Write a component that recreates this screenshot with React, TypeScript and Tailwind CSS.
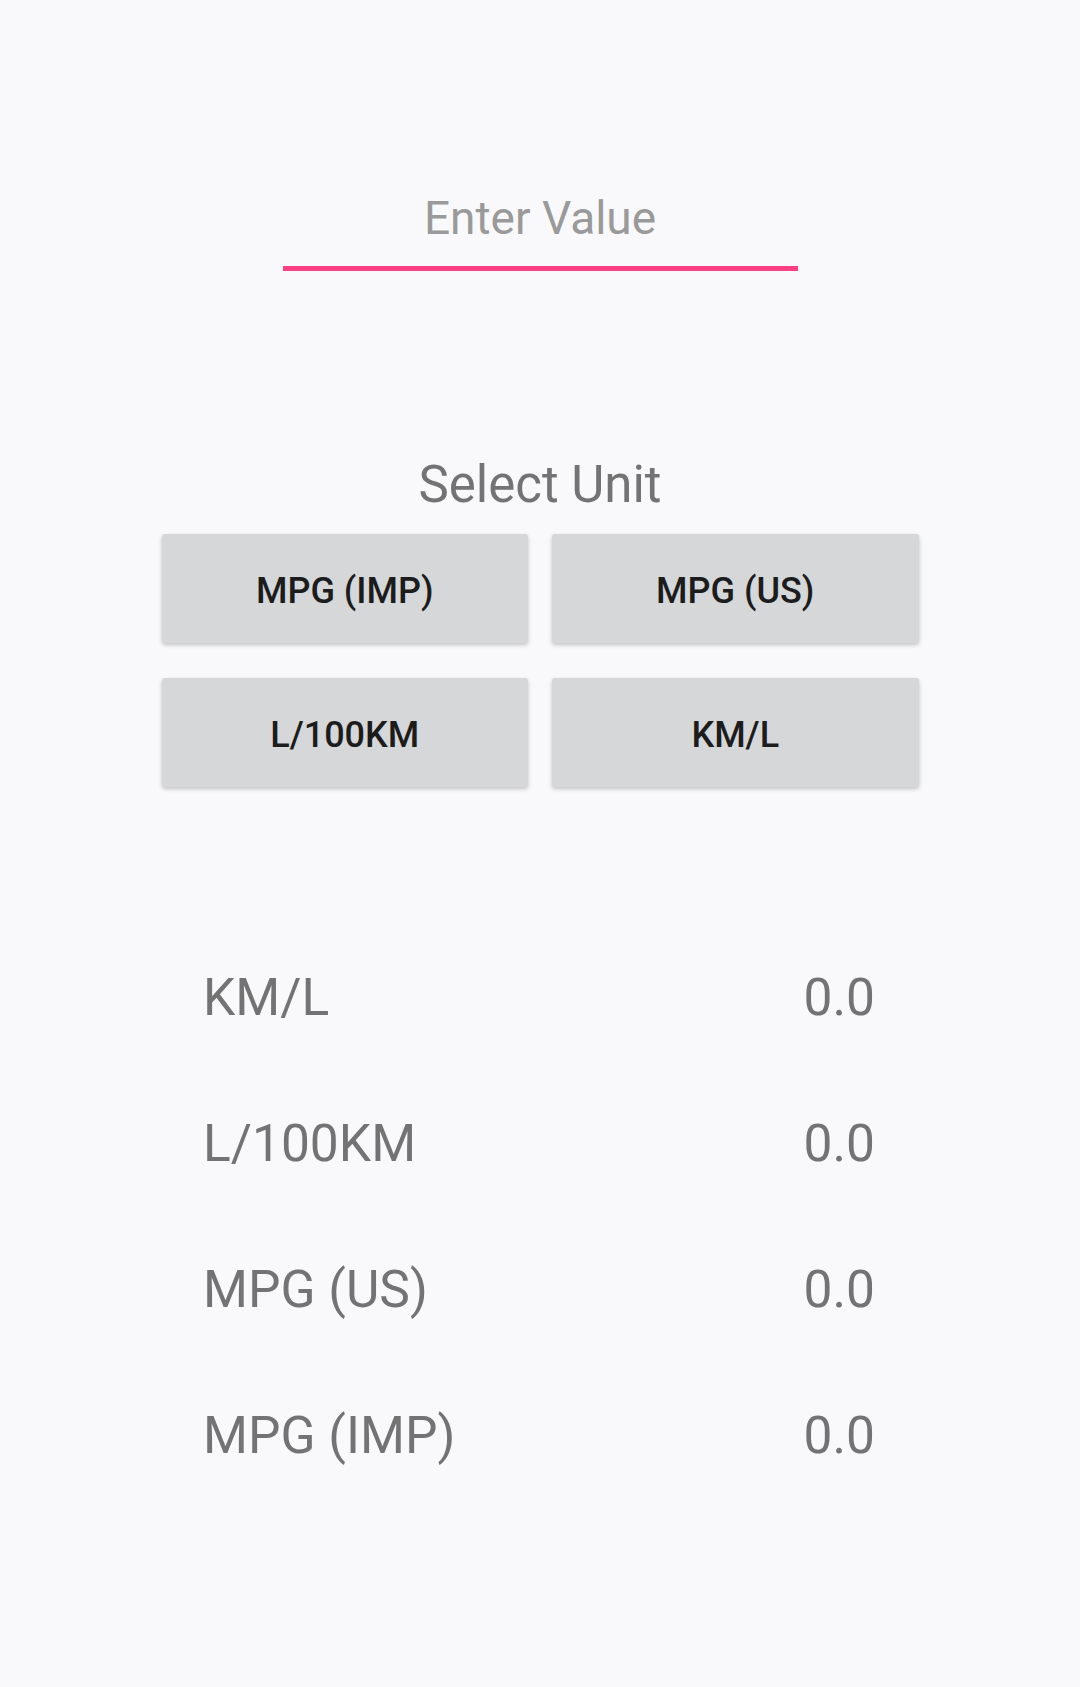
const UNITS = ["MPG (IMP)", "MPG (US)", "L/100KM", "KM/L"];

const RESULTS = [
  { label: "KM/L", value: "0.0" },
  { label: "L/100KM", value: "0.0" },
  { label: "MPG (US)", value: "0.0" },
  { label: "MPG (IMP)", value: "0.0" },
];

export default function App() {
  return (
    <div
      className="min-h-screen bg-[#f9f9fb] pb-[180px]"
      style={{ fontFamily: "Roboto, 'Noto Sans', sans-serif" }}
    >
      {/* input field */}
      <div className="mx-auto w-[515px] pt-[190px]">
        <div className="h-[56px] text-center text-[46px] leading-[56px] text-[#9a9a9a]">
          Enter Value
        </div>
        <div className="mt-[20px] h-[5px] bg-[#ff4081]" />
      </div>

      <div className="mt-[186px] h-[56px] text-center text-[51px] leading-[56px] text-[#737373]">
        Select Unit
      </div>

      <div className="mx-auto mt-[21px] grid w-[757px] grid-cols-2 gap-x-[24px] gap-y-[35px]">
        {UNITS.map((u) => (
          <button
            key={u}
            className="h-[109px] rounded-[3px] bg-[#d6d7d8] pt-[4px] text-[36px] font-medium text-[#1c1c1c] shadow-[0_2px_4px_rgba(0,0,0,0.22)]"
          >
            {u}
          </button>
        ))}
      </div>

      <div className="ml-[203px] mt-[181px] flex w-[672px] flex-col gap-[86px]">
        {RESULTS.map((r) => (
          <div
            key={r.label}
            className="flex h-[60px] items-center justify-between text-[51.5px] leading-[60px] text-[#737373]"
          >
            <span>{r.label}</span>
            <span>{r.value}</span>
          </div>
        ))}
      </div>
    </div>
  );
}
